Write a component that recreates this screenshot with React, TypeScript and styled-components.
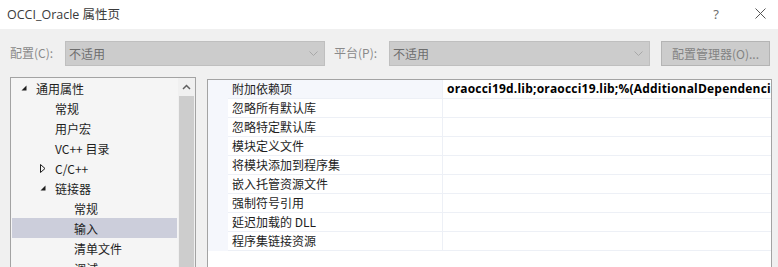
import React from "react";
import styled, { createGlobalStyle } from "styled-components";

const GlobalStyle = createGlobalStyle`
  html, body { margin: 0; padding: 0; background: #f0f0f0; overflow: hidden; }
  body { font-family: "Noto Sans CJK SC", "Noto Sans", sans-serif; font-size: 12px; }
`;

const Dialog = styled.div`
  width: 778px;
  height: 267px;
  display: flex;
  flex-direction: column;
  background: #f0f0f0;
  overflow: hidden;
`;

const TitleBar = styled.div`
  height: 29px;
  flex: none;
  background: #ffffff;
  display: flex;
  align-items: center;
  padding: 0 0 2px 7px;
  box-sizing: border-box;
`;

const Title = styled.div`
  flex: 1;
  font-family: "Open Sans", "Noto Sans CJK SC", sans-serif;
  font-size: 12.5px;
  color: #3a3a3a;
`;

const TitleButton = styled.div<{ $w: number }>`
  width: ${(p) => p.$w}px;
  display: flex;
  justify-content: center;
  align-items: center;
  color: #6e6e6e;
  font-family: "Noto Sans", sans-serif;
  font-size: 13px;
`;

const Toolbar = styled.div`
  height: 48px;
  flex: none;
  display: flex;
  align-items: flex-start;
  padding: 12px 0 0 10px;
  box-sizing: border-box;
`;

const Label = styled.div<{ $w: number; $gap?: number }>`
  width: ${(p) => p.$w}px;
  margin-left: ${(p) => p.$gap ?? 0}px;
  height: 25px;
  line-height: 24px;
  color: #8a8a8a;
  flex: none;
`;

const Combo = styled.div<{ $w: number }>`
  width: ${(p) => p.$w}px;
  height: 25px;
  box-sizing: border-box;
  background: #cccccc;
  border: 1px solid #bfbfbf;
  display: flex;
  align-items: center;
  padding: 0 0 1px 3px;
  color: #6d6d6d;
  flex: none;
`;

const ComboText = styled.span`
  flex: 1;
`;

const ComboArrow = styled.svg`
  width: 9px;
  height: 5px;
  margin-right: 6px;
`;

const Button = styled.div`
  margin-left: 11px;
  width: 109px;
  height: 25px;
  box-sizing: border-box;
  background: #cccccc;
  border: 1px solid #b4b4b4;
  display: flex;
  align-items: center;
  justify-content: center;
  padding-bottom: 1px;
  color: #838383;
  flex: none;
`;

const Main = styled.div`
  flex: 1;
  display: flex;
  align-items: flex-start;
  padding-left: 10px;
`;

const Tree = styled.div`
  width: 186px;
  height: 200px;
  box-sizing: border-box;
  border: 1px solid #a3a3a3;
  background: #f5f5f5;
  display: flex;
  flex: none;
`;

const TreeList = styled.div`
  flex: 1;
  display: flex;
  flex-direction: column;
  padding-left: 1px;
`;

const TreeRow = styled.div<{ $level: number; $selected?: boolean }>`
  height: 20px;
  flex: none;
  display: flex;
  align-items: center;
  margin-right: 1px;
  padding-left: ${(p) => 9 + p.$level * 19}px;
  background: ${(p) => (p.$selected ? "#cccedb" : "transparent")};
  color: #1e1e1e;
  white-space: nowrap;
`;

const Expander = styled.span`
  width: 15px;
  height: 20px;
  display: flex;
  align-items: center;
  flex: none;
`;

const ScrollBar = styled.div`
  width: 17px;
  flex: none;
  display: flex;
  flex-direction: column;
  background: #f0f0f0;
`;

const ScrollButton = styled.div`
  height: 18px;
  display: flex;
  align-items: center;
  justify-content: center;
`;

const ScrollThumb = styled.div`
  flex: 1;
  margin: 0 1px;
  background: #cdcdcd;
`;

const Grid = styled.div`
  margin: 2px 0 0 11px;
  width: 565px;
  height: 200px;
  box-sizing: border-box;
  border: 1px solid #a3a3a3;
  background: #ffffff;
  display: flex;
  flex-direction: column;
  flex: none;
`;

const GridRow = styled.div`
  display: grid;
  grid-template-columns: 20px 214px 1fr;
  height: 19px;
  flex: none;
  background: #f5f7fc;
`;

const NameCell = styled.div<{ $active?: boolean }>`
  box-sizing: border-box;
  height: 19px;
  padding: 0 0 1px 4px;
  border-bottom: 1px solid #edf0f6;
  background: ${(p) => (p.$active ? "#f5f7fc" : "#ffffff")};
  color: #1e1e1e;
  display: flex;
  align-items: center;
  white-space: nowrap;
`;

const ValueCell = styled.div`
  box-sizing: border-box;
  height: 19px;
  padding: 0 0 1px 4px;
  border-left: 1px solid #edf0f6;
  border-bottom: 1px solid #edf0f6;
  background: #ffffff;
  color: #000000;
  font-family: "Open Sans", "Noto Sans", sans-serif;
  font-weight: 700;
  font-size: 12px;
  letter-spacing: 0.2px;
  display: flex;
  align-items: center;
  white-space: nowrap;
  overflow: hidden;
`;

const Spacer = styled.div``;

const ExpandedIcon = () => (
  <svg width="6" height="6" viewBox="0 0 6 6">
    <polygon points="5.5,0.5 5.5,5.5 0.5,5.5" fill="#1e1e1e" />
  </svg>
);

const CollapsedIcon = () => (
  <svg width="6" height="9" viewBox="0 0 6 9">
    <polygon points="0.5,0.5 5,4.5 0.5,8.5" fill="none" stroke="#1e1e1e" strokeWidth="1" />
  </svg>
);

type TreeItem = { level: number; text: string; exp?: "open" | "closed"; selected?: boolean };

const treeItems: TreeItem[] = [
  { level: 0, text: "通用属性", exp: "open" },
  { level: 1, text: "常规" },
  { level: 1, text: "用户宏" },
  { level: 1, text: "VC++ 目录" },
  { level: 1, text: "C/C++", exp: "closed" },
  { level: 1, text: "链接器", exp: "open" },
  { level: 2, text: "常规" },
  { level: 2, text: "输入", selected: true },
  { level: 2, text: "清单文件" },
  { level: 2, text: "调试" },
];

const props = [
  "附加依赖项",
  "忽略所有默认库",
  "忽略特定默认库",
  "模块定义文件",
  "将模块添加到程序集",
  "嵌入托管资源文件",
  "强制符号引用",
  "延迟加载的 DLL",
  "程序集链接资源",
];

export default function App() {
  return (
    <Dialog>
      <GlobalStyle />
      <TitleBar>
        <Title>OCCI_Oracle 属性页</Title>
        <TitleButton $w={52}>?</TitleButton>
        <TitleButton $w={36}>
          <svg width="11" height="11" viewBox="0 0 11 11">
            <path d="M0.5 0.5 L10.5 10.5 M10.5 0.5 L0.5 10.5" stroke="#555" strokeWidth="1" />
          </svg>
        </TitleButton>
      </TitleBar>
      <Toolbar>
        <Label $w={55}>配置(C):</Label>
        <Combo $w={260}>
          <ComboText>不适用</ComboText>
          <ComboArrow viewBox="0 0 9 5">
            <polyline points="0.5,0.5 4.5,4.5 8.5,0.5" fill="none" stroke="#a8a8a8" />
          </ComboArrow>
        </Combo>
        <Label $w={55} $gap={9}>平台(P):</Label>
        <Combo $w={261}>
          <ComboText>不适用</ComboText>
          <ComboArrow viewBox="0 0 9 5">
            <polyline points="0.5,0.5 4.5,4.5 8.5,0.5" fill="none" stroke="#a8a8a8" />
          </ComboArrow>
        </Combo>
        <Button>配置管理器(O)...</Button>
      </Toolbar>
      <Main>
        <Tree>
          <TreeList>
            {treeItems.map((it, i) => (
              <TreeRow key={i} $level={it.level} $selected={it.selected}>
                <Expander>
                  {it.exp === "open" && <ExpandedIcon />}
                  {it.exp === "closed" && <CollapsedIcon />}
                </Expander>
                {it.text}
              </TreeRow>
            ))}
          </TreeList>
          <ScrollBar>
            <ScrollButton>
              <svg width="9" height="6" viewBox="0 0 9 6">
                <polyline points="1,5 4.5,1.5 8,5" fill="none" stroke="#606060" strokeWidth="1.5" />
              </svg>
            </ScrollButton>
            <ScrollThumb />
          </ScrollBar>
        </Tree>
        <Grid>
          {props.map((p, i) => (
            <GridRow key={i}>
              <Spacer />
              <NameCell $active={i === 0}>{p}</NameCell>
              <ValueCell>{i === 0 ? "oraocci19d.lib;oraocci19.lib;%(AdditionalDependencies)" : ""}</ValueCell>
            </GridRow>
          ))}
        </Grid>
      </Main>
    </Dialog>
  );
}
